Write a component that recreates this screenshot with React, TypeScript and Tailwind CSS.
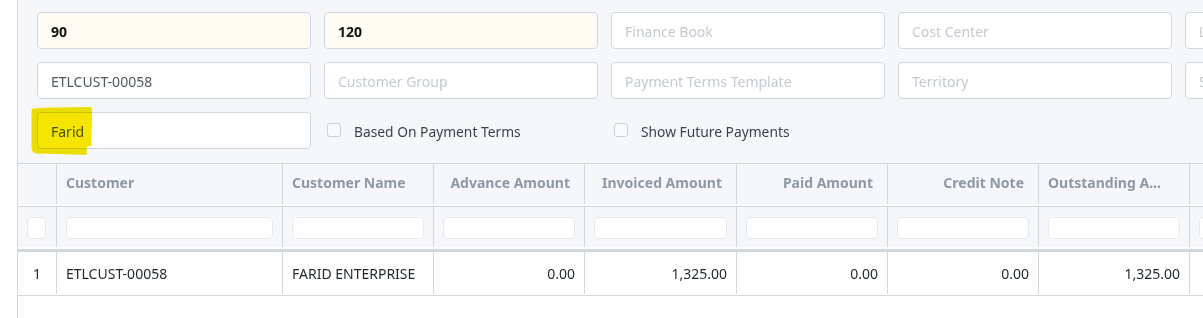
import React from "react";

type Field = { value?: string; placeholder: string; bold?: boolean; warm?: boolean };

const formRows: Field[][] = [
  [
    { value: "90", placeholder: "Range 3", bold: true, warm: true },
    { value: "120", placeholder: "Range 4", bold: true, warm: true },
    { placeholder: "Finance Book" },
    { placeholder: "Cost Center" },
    { placeholder: "Location" },
  ],
  [
    { value: "ETLCUST-00058", placeholder: "Customer" },
    { placeholder: "Customer Group" },
    { placeholder: "Payment Terms Template" },
    { placeholder: "Territory" },
    { placeholder: "Sales Partner" },
  ],
];

const columns = [
  { label: "Customer", width: "w-[226px]", align: "left", value: "ETLCUST-00058" },
  { label: "Customer Name", width: "w-[151px]", align: "left", value: "FARID ENTERPRISE" },
  { label: "Advance Amount", width: "w-[151px]", align: "right", value: "0.00" },
  { label: "Invoiced Amount", width: "w-[152px]", align: "right", value: "1,325.00" },
  { label: "Paid Amount", width: "w-[151px]", align: "right", value: "0.00" },
  { label: "Credit Note", width: "w-[151px]", align: "right", value: "0.00" },
  { label: "Outstanding A...", width: "w-[151px]", align: "left", value: "1,325.00", numeric: true },
];

const FormInput = ({ field }: { field: Field }) => (
  <div
    className={`flex h-[37px] w-[274px] shrink-0 items-center rounded-[4px] border border-[#d1d8dd] px-[13px] pt-[2px] ${
      field.warm ? "bg-[#fffcf3]" : "bg-white"
    }`}
  >
    {field.value ? (
      <span className={field.bold ? "font-bold text-[#111]" : "text-[#4f5861]"}>{field.value}</span>
    ) : (
      <span className="whitespace-nowrap text-[#c3cad1]">{field.placeholder}</span>
    )}
  </div>
);

const Check = ({ label }: { label: string }) => (
  <div className="flex w-[274px] shrink-0 items-center gap-[13px] pl-[3px]">
    <span className="mb-[1px] h-[14px] w-[14px] rounded-[3px] border border-[#c9d0d6] bg-[#f8fafb]" />
    <span className="pt-[4px] text-[13.8px] text-[#3a434c]">{label}</span>
  </div>
);

export default function App() {
  return (
    <div className="relative flex h-[318px] w-[1203px] overflow-hidden bg-white font-['Noto_Sans',sans-serif] text-[14px]">
      <div className="w-[17px] shrink-0" />
      <div className="flex min-w-0 flex-1 flex-col border-l border-[#d1d8dd]">
        {/* filters */}
        <div className="flex flex-col gap-[13px] bg-[#f5f7fa] pb-[14px] pl-[19px] pt-[12px]">
          {formRows.map((row, i) => (
            <div key={i} className="flex gap-[13px]">
              {row.map((f) => (
                <FormInput key={f.placeholder} field={f} />
              ))}
            </div>
          ))}
          <div className="flex gap-[13px]">
            <FormInput field={{ value: "Farid", placeholder: "Customer Name" }} />
            <Check label="Based On Payment Terms" />
            <Check label="Show Future Payments" />
          </div>
        </div>

        {/* report table */}
        <div className="border-t border-[#d1d8dd]">
          <div className="flex h-[40px] bg-[#f5f7fa] font-bold text-[#8d99a6]">
            <div className="w-[39px] shrink-0 border-r border-[#d1d8dd]" />
            {columns.map((c) => (
              <div
                key={c.label}
                className={`flex shrink-0 items-center border-r border-[#d1d8dd] pb-[3px] ${c.width} ${
                  c.align === "right" ? "justify-end pr-[14px]" : "pl-[9px]"
                }`}
              >
                <span className="truncate">{c.label}</span>
              </div>
            ))}
            <div className="flex-1" />
          </div>
          <div className="h-[2px] bg-white" />
          <div className="h-px bg-[#d1d8dd]" />
          <div className="flex h-[40px] bg-[#f5f7fa]">
            <div className="w-[39px] shrink-0 border-r border-[#d1d8dd] pl-[9px] pr-[10px] pt-[10px]">
              <div className="h-[22px] rounded-[4px] border border-[#e6e9ec] bg-white" />
            </div>
            {columns.map((c) => (
              <div key={c.label} className={`shrink-0 border-r border-[#d1d8dd] px-[9px] pt-[10px] ${c.width}`}>
                <div className="h-[22px] rounded-[4px] border border-[#e6e9ec] bg-white" />
              </div>
            ))}
            <div className="flex-1 pl-[9px] pt-[10px]">
              <div className="h-[22px] rounded-l-[4px] border border-r-0 border-[#e6e9ec] bg-white" />
            </div>
          </div>
          <div className="h-[2px] bg-white" />
          <div className="h-[3px] bg-[#d1d8dd]" />
          <div className="flex h-[42px] text-[#1f272e]">
            <div className="flex w-[39px] shrink-0 items-center justify-center border-r border-[#d1d8dd]">1</div>
            {columns.map((c) => (
              <div
                key={c.label}
                className={`flex shrink-0 items-center border-r border-[#d1d8dd] ${c.width} ${
                  c.align === "right" || c.numeric ? "justify-end pr-[9px]" : "pl-[9px]"
                }`}
              >
                {c.value}
              </div>
            ))}
            <div className="flex-1" />
          </div>
          <div className="h-px bg-white" />
          <div className="h-px bg-[#d1d8dd]" />
        </div>
      </div>

      {/* highlighter stroke over the customer name filter */}
      <svg className="pointer-events-none absolute left-0 top-0 mix-blend-multiply" width="120" height="170">
        <path
          d="M32 109 Q40 107 60 107.5 L91 107 L92 109 L91.5 146 L87 146.5 L86.5 155 L60 154 L36 153.5 Q31.5 152 31.5 148 L31.5 112 Z"
          fill="#f5e500"
        />
      </svg>
    </div>
  );
}
